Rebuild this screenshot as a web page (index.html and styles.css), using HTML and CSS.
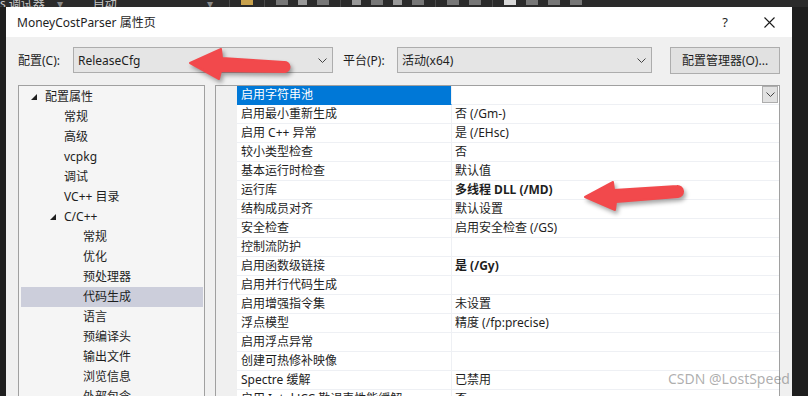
FILE: index.html
```html
<!DOCTYPE html>
<html lang="zh-CN">
<head>
    <meta charset="UTF-8">
    <title>MoneyCostParser 属性页</title>
    <link rel="stylesheet" href="styles.css">
</head>
<body>
<div class="screen">

    <!-- barra de ferramentas do VS, quase toda cortada -->
    <div class="toolbar">
        <span class="tb-text">s</span>
        <span class="tb-text w1">调试器</span>
        <span class="tb-text w2">▾</span>
        <span class="tb-text w3">自动</span>
        <span class="tb-text w4">▾</span>
        <span class="tb-sep"></span>
        <span class="tb-ico folder"></span>
        <span class="tb-sep"></span>
        <span class="tb-ico"></span>
        <span class="tb-ico g1"></span>
        <span class="tb-ico"></span>
        <span class="tb-sep"></span>
        <span class="tb-ico g1"></span>
        <span class="tb-ico"></span>
        <span class="tb-ico g1"></span>
        <span class="tb-ico"></span>
        <span class="tb-sep"></span>
        <span class="tb-ico"></span>
        <span class="tb-ico"></span>
        <span class="tb-sep"></span>
        <span class="tb-ico white"></span>
        <span class="tb-ico"></span>
        <span class="tb-ico"></span>
        <span class="tb-ico"></span>
    </div>

    <div class="desk">
        <div class="gutter"></div>

        <div class="dialog">
            <div class="titlebar">
                <span class="title">MoneyCostParser 属性页</span>
                <span class="help">?</span>
                <span class="close">
                    <svg width="11" height="11" viewBox="0 0 11 11"><path d="M0.5 0.5 L10.5 10.5 M10.5 0.5 L0.5 10.5" stroke="#1a1a1a" stroke-width="1.1" fill="none"/></svg>
                </span>
            </div>

            <div class="dlg-body">
                <div class="cfg-row">
                    <span class="lbl">配置(C):</span>
                    <div class="combo combo-cfg">
                        <span>ReleaseCfg</span>
                        <svg class="chev" width="9" height="5" viewBox="0 0 9 5"><path d="M0.5 0.5 L4.5 4.5 L8.5 0.5" stroke="#444" fill="none"/></svg>
                    </div>
                    <span class="lbl lbl-plat">平台(P):</span>
                    <div class="combo combo-plat">
                        <span>活动(x64)</span>
                        <svg class="chev" width="9" height="5" viewBox="0 0 9 5"><path d="M0.5 0.5 L4.5 4.5 L8.5 0.5" stroke="#444" fill="none"/></svg>
                    </div>
                    <button class="cfg-mgr">配置管理器(O)...</button>
                </div>

                <div class="panes">
                    <div class="tree">
                        <div class="node lv0 open"><span class="tw"><svg width="6" height="6" viewBox="0 0 6 6"><polygon points="0,6 6,6 6,0" fill="#1e1e1e"/></svg></span>配置属性</div>
                        <div class="node lv1">常规</div>
                        <div class="node lv1">高级</div>
                        <div class="node lv1">vcpkg</div>
                        <div class="node lv1">调试</div>
                        <div class="node lv1">VC++ 目录</div>
                        <div class="node lv1 open"><span class="tw"><svg width="6" height="6" viewBox="0 0 6 6"><polygon points="0,6 6,6 6,0" fill="#1e1e1e"/></svg></span>C/C++</div>
                        <div class="node lv2">常规</div>
                        <div class="node lv2">优化</div>
                        <div class="node lv2">预处理器</div>
                        <div class="node lv2 selected">代码生成</div>
                        <div class="node lv2">语言</div>
                        <div class="node lv2">预编译头</div>
                        <div class="node lv2">输出文件</div>
                        <div class="node lv2">浏览信息</div>
                        <div class="node lv2">外部包含</div>
                    </div>

                    <div class="grid">
                        <div class="prop active">
                            <span class="gut"></span>
                            <span class="name">启用字符串池</span>
                            <span class="val">
                                <span class="drop"><svg width="9" height="5" viewBox="0 0 9 5"><path d="M0.5 0.5 L4.5 4.5 L8.5 0.5" stroke="#444" fill="none"/></svg></span>
                            </span>
                        </div>
                        <div class="prop"><span class="gut"></span><span class="name">启用最小重新生成</span><span class="val">否 (/Gm-)</span></div>
                        <div class="prop"><span class="gut"></span><span class="name">启用 C++ 异常</span><span class="val">是 (/EHsc)</span></div>
                        <div class="prop"><span class="gut"></span><span class="name">较小类型检查</span><span class="val">否</span></div>
                        <div class="prop"><span class="gut"></span><span class="name">基本运行时检查</span><span class="val">默认值</span></div>
                        <div class="prop"><span class="gut"></span><span class="name">运行库</span><span class="val bold">多线程 DLL (/MD)</span></div>
                        <div class="prop"><span class="gut"></span><span class="name">结构成员对齐</span><span class="val">默认设置</span></div>
                        <div class="prop"><span class="gut"></span><span class="name">安全检查</span><span class="val">启用安全检查 (/GS)</span></div>
                        <div class="prop"><span class="gut"></span><span class="name">控制流防护</span><span class="val"></span></div>
                        <div class="prop"><span class="gut"></span><span class="name">启用函数级链接</span><span class="val bold">是 (/Gy)</span></div>
                        <div class="prop"><span class="gut"></span><span class="name">启用并行代码生成</span><span class="val"></span></div>
                        <div class="prop"><span class="gut"></span><span class="name">启用增强指令集</span><span class="val">未设置</span></div>
                        <div class="prop"><span class="gut"></span><span class="name">浮点模型</span><span class="val">精度 (/fp:precise)</span></div>
                        <div class="prop"><span class="gut"></span><span class="name">启用浮点异常</span><span class="val"></span></div>
                        <div class="prop"><span class="gut"></span><span class="name">创建可热修补映像</span><span class="val"></span></div>
                        <div class="prop"><span class="gut"></span><span class="name">Spectre 缓解</span><span class="val">已禁用</span></div>
                        <div class="prop"><span class="gut"></span><span class="name">启用 Intel JCC 勘误表性能缓解</span><span class="val">否</span></div>
                    </div>
                </div>
            </div>
        </div>

        <div class="right-dark"></div>
    </div>

    <!-- setas vermelhas da captura -->
    <svg class="arrows" width="808" height="396" viewBox="0 0 808 396">
        <path d="M190 63 L221 49 L222 58 L284 62 A5 5 0 0 1 285 72 L221 71 L219 79 Z" fill="#f2494c" stroke="#f2494c" stroke-width="2" stroke-linejoin="round"/>
        <path d="M585 197 L613 182 L614 190 L677 186 A5.5 5.5 0 0 1 678 197 L616 202 L615 210 Z" fill="#f2494c" stroke="#f2494c" stroke-width="2" stroke-linejoin="round"/>
    </svg>

    <div class="watermark">CSDN @LostSpeed</div>
</div>
</body>
</html>
```

FILE: styles.css
```css
/* Página de propriedades do VS */

:root {
    --escuro: #1f1f1f;
    --cinza-dlg: #f0f0f0;
    --borda: #a0a0a0;
    --azul-sel: #0078d7;
    --linha: #eef0f4;
}

body {
    margin: 0;
    background: var(--escuro);
    font-family: "Noto Sans", "Noto Sans CJK SC", sans-serif;
    font-size: 12px;
    color: #1e1e1e;
}

.screen {
    position: relative; width: 808px; height: 396px;
    overflow: hidden; background: var(--escuro);
}

/* --- barra de ferramentas (fundo) --- */
.toolbar {
    height: 7px; overflow: hidden; display: flex; align-items: flex-end;
    background: #2b2b2b; color: #c8c8c8;
}
.tb-text { font-size: 12px; line-height: 13px; margin-bottom: -3px; margin-right: 3px; white-space: nowrap; }
.tb-text.w1 { margin-right: 12px; }
.tb-text.w2 { margin-right: 30px; color: #888; }
.tb-text.w3 { margin-right: 90px; }
.tb-text.w4 { margin-right: 10px; color: #888; }
.tb-sep { width: 1px; height: 7px; background: #4a4a4a; margin: 0 6px; }
.tb-ico { width: 12px; height: 5px; margin: 0 5px 2px 5px; background: #777; }
.tb-ico.g1 { background: #999; width: 9px; }
.tb-ico.folder { background: #c9a24d; }
.tb-ico.white { background: #d9d9d9; }

.desk { display: flex; height: 389px; }
.gutter { width: 6px; background: var(--escuro); }
.right-dark { flex: 1; background: #1e1e1e; }

/* --- janela --- */
.dialog {
    width: 786px; background: var(--cinza-dlg);
    display: flex; flex-direction: column; overflow: hidden;
}
.titlebar {
    height: 30px; background: #fff; display: flex; align-items: center;
    padding-left: 11px; flex-shrink: 0;
}
.title { font-size: 12px; }
.help { margin-left: auto; width: 42px; text-align: center; font-size: 13px; }
.close { width: 46px; display: flex; justify-content: center; }

.dlg-body { padding: 9px 12px 0 12px; flex: 1; display: flex; flex-direction: column; }

.cfg-row { height: 28px; display: flex; align-items: center; flex-shrink: 0; }
.lbl { width: 55px; }
.lbl.lbl-plat { width: 54px; margin-left: 10px; }
.combo {
    height: 26px; box-sizing: border-box; border: 1px solid #adadad;
    background: #e5e5e5; display: flex; align-items: center; padding: 0 5px 0 4px;
}
.combo span { flex: 1; }
.combo-cfg { width: 260px; }
.combo-plat { width: 255px; }
.cfg-mgr {
    margin-left: 18px; width: 110px; height: 27px;
    border: 1px solid #adadad; background: #e1e1e1;
    font-family: inherit; font-size: 12px; color: #1e1e1e; padding: 0;
}

.panes { margin-top: 11px; display: flex; gap: 10px; flex: 1; overflow: hidden; }

/* --- árvore à esquerda --- */
.tree {
    width: 187px; box-sizing: border-box; border: 1px solid var(--borda);
    border-bottom: none; background: #f5f5f5; padding: 1px 1px 0 2px;
}
.node { height: 20px; line-height: 20px; display: flex; align-items: center; white-space: nowrap; }
.node .tw { width: 14px; display: flex; align-items: center; }
.node.lv0 { padding-left: 10px; }
.node.lv1 { padding-left: 43px; }
.node.lv1.open { padding-left: 29px; }
.node.lv2 { padding-left: 62px; }
.node.selected { background: #cccedb; }

/* --- grade de propriedades --- */
.grid {
    width: 565px; box-sizing: border-box; border: 1px solid var(--borda);
    border-bottom: none; background: #fff;
}
.prop { display: flex; height: 19px; }
.prop .gut { width: 21px; background: var(--cinza-dlg); flex-shrink: 0; }
.prop .name, .prop .val {
    box-sizing: border-box; border-bottom: 1px solid var(--linha);
    line-height: 18px; padding-left: 4px; white-space: nowrap; overflow: hidden;
}
.prop .name { width: 215px; border-right: 1px solid var(--linha); flex-shrink: 0; }
.prop .val { flex: 1; padding-left: 3px; display: flex; justify-content: flex-end; }
.prop .val:not(:empty) { justify-content: flex-start; }
.prop .val.bold { font-weight: bold; }
.prop.active .name { background: var(--azul-sel); color: #fff; border-bottom-color: var(--azul-sel); }
.prop.active .val { justify-content: flex-end; padding-right: 1px; }
.drop {
    width: 16px; height: 17px; box-sizing: border-box; border: 1px solid #adadad;
    background: #e1e1e1; display: flex; align-items: center; justify-content: center;
}

/* --- camadas por cima --- */
.arrows {
    position: absolute; left: 0; top: 0; pointer-events: none;
    filter: drop-shadow(2px 3px 2px rgba(0, 0, 0, 0.35));
}
.watermark {
    position: absolute; left: 668px; top: 369px;
    font-size: 14px; color: rgba(120, 120, 120, 0.6); white-space: nowrap;
}
```
